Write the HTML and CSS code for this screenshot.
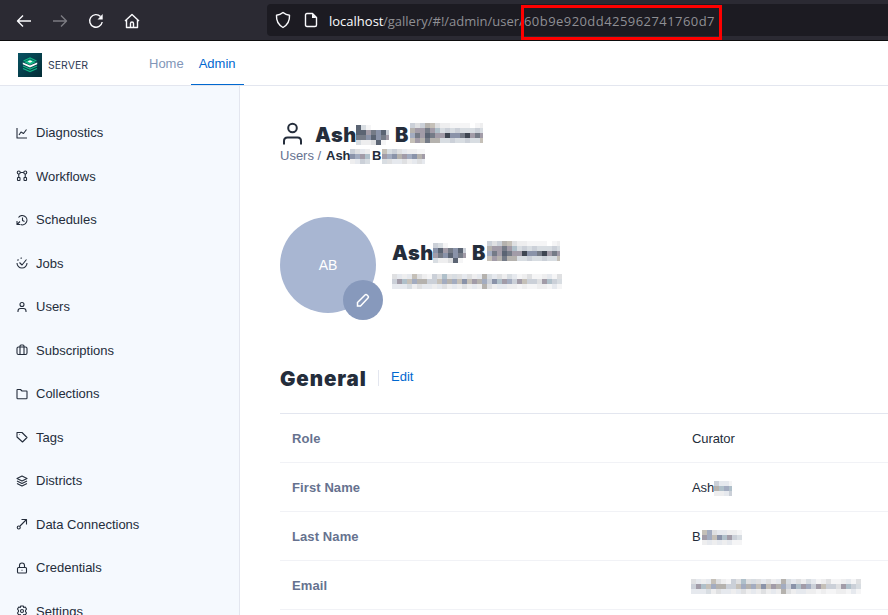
FILE: index.html
```html
<!DOCTYPE html>
<html lang="en">
<head>
    <meta charset="UTF-8">
    <meta name="viewport" content="width=device-width, initial-scale=1.0">
    <title>Server Admin - User</title>
    <link rel="stylesheet" href="styles.css">
</head>
<body>

<div class="toolbar">
    <div class="toolbar-buttons">
        <svg width="16" height="16" viewBox="0 0 16 16"><path d="M15 8H1.500M7 2.500L1.500 8L7 13.500"/></svg>
        <svg class="disabled" width="16" height="16" viewBox="0 0 16 16"><path d="M1 8h13.500M9 2.500L14.500 8L9 13.500"/></svg>
        <svg width="16" height="16" viewBox="0 0 16 16"><path d="M14.200 9A6.300 6.300 0 1 1 12.500 3.500"/><path class="solid" d="M14.700 1v5.500H9.500z"/></svg>
        <svg width="16" height="16" viewBox="0 0 16 16"><path d="M1 8l7-6.500L15 8M2.500 7v7.500h11V7M6.500 14.500v-4q0-1.500 1.500-1.500t1.500 1.500v4"/></svg>
    </div>
    <div class="address">
        <svg width="16" height="18" viewBox="0 0 16 18"><path d="M8 1.500Q11 4 14.500 4.300Q15 12.500 8 16.500Q1 12.500 1.500 4.300Q5 4 8 1.500z"/></svg>
        <svg class="page-icon" width="14" height="16" viewBox="0 0 14 16"><path d="M3 1.500h5.500l4 4V13q0 1.500-1.500 1.500H3Q1.500 14.500 1.500 13V3Q1.500 1.500 3 1.500z"/><path class="solid" d="M8 1.500v4.500h4.500z"/></svg>
        <span class="host">localhost</span><span class="path">/gallery/#!/admin/user/</span><span class="user-id">60b9e920dd425962741760d7</span>
    </div>
</div>

<div class="navbar">
    <svg class="logo" width="24" height="24" viewBox="0 0 24 24">
        <defs><linearGradient id="logo-bg" x1="0" y1="0" x2="1" y2="1"><stop offset="0" stop-color="#075262"/><stop offset="1" stop-color="#032c35"/></linearGradient></defs>
        <rect width="24" height="24" fill="url(#logo-bg)"/>
        <path d="M5.500 8L12 5l6.500 3" fill="none" stroke="#12b886" stroke-width="1.200"/>
        <path d="M12 6.300L18 9l-6 3-6-3z" fill="#12b886"/>
        <path d="M9.500 8.500L12 7.300l2.500 1.200L12 9.700z" fill="#fff"/>
        <path d="M4.800 9.500L12 12.500l7.200-3v1.800L12 14.500l-7.200-3.200z" fill="#fff"/>
        <path d="M5 13l7 3 7-3M5 15.500l7 3 7-3" fill="none" stroke="#12b886" stroke-width="1.300"/>
    </svg>
    <span class="brand">SERVER</span>
    <a class="nav-link">Home</a>
    <a class="nav-link active">Admin</a>
</div>

<div class="layout">
    <div class="sidebar">
        <a class="item"><svg viewBox="0 0 24 24"><path d="M2 2v20h20M6 16l4-6 5 3 6-8"/></svg>Diagnostics</a>
        <a class="item"><svg viewBox="0 0 24 24"><circle cx="5.500" cy="5" r="3"/><circle cx="18.500" cy="5" r="3"/><rect x="3" y="15" width="5" height="6" rx="1"/><rect x="16" y="15" width="5" height="6" rx="1"/><path d="M8.500 5h7M5.500 8v7M18.500 8v7"/></svg>Workflows</a>
        <a class="item"><svg viewBox="0 0 24 24"><path d="M5 7a9.300 9.300 0 1 1 4 14M13 7v6l4 2M2 21l6-6M2 14v7h6"/></svg>Schedules</a>
        <a class="item"><svg viewBox="0 0 24 24"><path d="M2 12a10 10 0 0 0 20 0M3 7l2-2M9 2.500L12 2M7 11l5 5L21 5"/></svg>Jobs</a>
        <a class="item"><svg viewBox="0 0 24 24"><circle cx="12" cy="7" r="4"/><path d="M4 22v-2q0-5 5-5h6q5 0 5 5v2"/></svg>Users</a>
        <a class="item"><svg viewBox="0 0 24 24"><rect x="2" y="6" width="20" height="15" rx="3"/><path d="M8 21V4q0-2 2-2h4q2 0 2 2v17"/></svg>Subscriptions</a>
        <a class="item"><svg viewBox="0 0 24 24"><path d="M2 20V4q0-1 1-1h6l3 3h9q1 0 1 1v13q0 1.500-1.500 1.500h-17Q2 21.500 2 20z"/></svg>Collections</a>
        <a class="item"><svg viewBox="0 0 24 24"><path d="M2 3h10l10 10-9 9L2 12zM7 7v1"/></svg>Tags</a>
        <a class="item"><svg viewBox="0 0 24 24"><path d="M12 2l10 5-10 5L2 7zM2 12l10 5 10-5M2 17l10 5 10-5"/></svg>Districts</a>
        <a class="item"><svg viewBox="0 0 24 24"><circle cx="5.500" cy="19" r="3"/><path d="M8 16L21 3M11 3h10v10"/></svg>Data Connections</a>
        <a class="item"><svg viewBox="0 0 24 24"><rect x="3" y="11" width="18" height="11" rx="2"/><path d="M7 11V7a5 5 0 0 1 10 0v4M11 16.500h2"/></svg>Credentials</a>
        <a class="item"><svg viewBox="0 0 24 24"><circle cx="12" cy="12" r="3"/><path d="M9.500 2h5l1 3 3-1 2.500 4-2 3v2l2 3-2.500 4-3-1-1 3h-5l-1-3-3 1L3 16l2-3v-2L3 8l2.500-4 3 1z"/></svg>Settings</a>
    </div>

    <div class="content">
        <div class="page-title">
            <svg class="title-icon" width="24" height="24" viewBox="0 0 24 24"><circle cx="12.500" cy="6" r="4.300"/><path d="M4 22.500V19q0-3.500 3.500-3.500h10q3.500 0 3.500 3.500v3.500"/></svg>
            <span class="name"><span class="first">Ash</span><i class="mosaic" data-rows="1aeffff 1142319 2231324 addb1ef"></i><span class="last">B</span><i class="mosaic surname" data-rows="9b968bddeeeefed 644247a9a9aaa9a 524124403320424 846266aa9aa9aa8"></i></span>
        </div>
        <div class="breadcrumb">
            <span class="crumb">Users&nbsp;/&nbsp;</span><b class="crumb-first">Ash</b><i class="mosaic" data-rows="9bcd 3547 dc9a"></i><b class="crumb-last">B</b><i class="mosaic" data-rows="8a9bcddee 453645364 abccbdcbc"></i>
        </div>

        <div class="profile">
            <div class="avatar">AB
                <span class="avatar-edit"><svg width="16" height="16" viewBox="0 0 16 16"><path d="M2.500 14v-3.500l7.500-7.500q1-1 2 0l1 1q1 1 0 2L5.500 14z"/></svg></span>
            </div>
            <div class="profile-text">
                <span class="name"><span class="first">Ash</span><i class="mosaic" data-rows="9aeffff 3142319 4231324 addb1ef"></i><span class="last">B</span><i class="mosaic surname" data-rows="9b968bddeeeefed 644247a9a9aaa9a 524124403320424 846266aa9aa9aa8"></i></span>
                <i class="mosaic email" data-rows="bcdc8bde9b7babcbdc6acbdacedbeedceb 94785669985658384659374594899b479a cccadbccdcbdcdbdcd6bdccddedeeddece"></i>
            </div>
        </div>

        <div class="section-title">
            <h2>General</h2>
            <a class="edit">Edit</a>
        </div>

        <div class="details">
            <div class="row"><span class="label">Role</span><span class="value">Curator</span></div>
            <div class="row"><span class="label">First Name</span><span class="value"><span class="value-first">Ash</span><i class="mosaic value-rest" data-rows="9cce 6757 ddc9"></i></span></div>
            <div class="row"><span class="label">Last Name</span><span class="value"><span class="value-last">B</span><i class="mosaic" data-rows="85bccdde 4583749a dcdcdcee"></i></span></div>
            <div class="row"><span class="label">Email</span><span class="value"><i class="mosaic row-email" data-rows="bcdc8bde9b7babcbdc6acbdacedbeedceb 94785669985658384659374594899b479a cccadbccdcbdcdbdcd6bdccddedeeddece"></i></span></div>
        </div>
    </div>
</div>

<script src="mosaic.js"></script>
</body>
</html>
```
FILE: styles.css
```css
*, *::after {
    box-sizing: border-box;
}
body {
    margin: 0;
    height: 615px;
    overflow: hidden;
    font-family: "Liberation Sans", Arial, sans-serif;
    font-size: 13px;
    color: #242d3b;
    background-color: #fff;
}
svg {
    display: block;
    flex: none;
    fill: none;
}

/* browser toolbar */
.toolbar {
    display: flex;
    height: 41px;
    padding-top: 4px;
    background-color: #2b2a33;
    border-bottom: 1px solid #0c0c0d;
}
.toolbar svg {
    stroke: #fbfbfe;
    stroke-width: 1.4;
    stroke-linejoin: round;
}
.toolbar .solid {
    fill: #fbfbfe;
    stroke: none;
}
.toolbar .disabled {
    stroke: #7c7b82;
}
.toolbar-buttons {
    display: flex;
    gap: 20px;
    width: 267px;
    padding: 9px 0 0 16px;
}
.address {
    display: flex;
    align-items: center;
    flex: 1;
    height: 32px;
    padding-left: 8px;
    background-color: #1c1b22;
    border-radius: 4px 0 0 4px;
    font-family: "Open Sans", "Noto Sans", sans-serif;
    font-size: 13px;
    color: #8f8f94;
    white-space: nowrap;
}
.address span {
    padding-top: 2px;
}
.page-icon {
    margin: 0 11px 0 13px;
}
.host {
    width: 54px;
    color: #fbfbfe;
}
.path {
    width: 138px;
}
.address .user-id {
    position: relative;
    width: 201px;
    padding-left: 3px;
    letter-spacing: 0.44px;
}
.user-id::after {
    content: "";
    position: absolute;
    left: 0;
    top: -5px;
    width: 201px;
    height: 35px;
    border: 3px solid #fe0000;
}

/* app header */
.navbar {
    display: flex;
    align-items: center;
    height: 45px;
    padding-left: 18px;
    border-bottom: 1px solid #e3e6ef;
}
.logo {
    margin-top: 4px;
}
.brand {
    width: 93px;
    padding: 4px 0 0 6px;
    font-family: Inter, sans-serif;
    font-size: 10.5px;
    color: #323e58;
}
.nav-link {
    height: 44px;
    padding: 0 8px;
    margin-left: 6px;
    line-height: 45px;
    color: #8296b8;
}
.nav-link.active {
    margin-left: -1px;
    color: #0068d0;
    border-bottom: 1px solid #0068d0;
}

.layout {
    display: flex;
    height: 529px;
}
.sidebar {
    width: 240px;
    padding-top: 25px;
    background-color: #f5f9fe;
    border-right: 1px solid #e3e6ef;
}
.item {
    display: flex;
    align-items: center;
    gap: 8px;
    height: 43.5px;
    padding-left: 16px;
}
.item svg {
    width: 12px;
    height: 12px;
    stroke: #242d3b;
    stroke-width: 2.2;
    stroke-linejoin: round;
}

.content {
    flex: 1;
    padding: 36px 0 0 40px;
}
.mosaic {
    display: block;
    flex: none;
    overflow: hidden;
}
.name {
    display: flex;
    align-items: center;
    height: 24px;
    font-family: Inter, sans-serif;
    font-size: 20px;
    font-weight: 900;
    letter-spacing: 0.5px;
}
.name .mosaic {
    width: 33px;
}
.name .surname {
    width: 73px;
    margin-bottom: 4px;
}
.first {
    width: 41px;
}
.last {
    width: 15px;
    margin-left: 6px;
}
.page-title {
    display: flex;
    align-items: center;
    height: 24px;
    gap: 11px;
}
.page-title .name {
    padding-top: 2px;
}
.title-icon {
    stroke: #242d3b;
    stroke-width: 2;
}
.breadcrumb {
    display: flex;
    align-items: center;
    height: 18px;
    color: #66728f;
}
.crumb {
    width: 46px;
    white-space: nowrap;
}
.breadcrumb b {
    color: #242d3b;
}
.breadcrumb .mosaic {
    max-width: 43px;
    margin-top: 2px;
}
.crumb-first {
    width: 24px;
}
.crumb-last {
    width: 10px;
    margin-left: 2px;
}

.profile {
    display: flex;
    gap: 16px;
    margin-top: 53px;
}
.avatar {
    position: relative;
    width: 96px;
    height: 96px;
    border-radius: 50%;
    background-color: #a8b6d2;
    color: #fff;
    font-size: 14px;
    line-height: 96px;
    text-align: center;
}
.avatar-edit {
    position: absolute;
    left: 63px;
    top: 63px;
    display: flex;
    align-items: center;
    justify-content: center;
    width: 40px;
    height: 40px;
    border-radius: 50%;
    background-color: #8799bc;
}
.avatar-edit svg {
    stroke: #fff;
    stroke-width: 1.5;
}
.profile-text {
    padding-top: 24px;
}
.email {
    margin-top: 9px;
}

.section-title {
    display: flex;
    align-items: center;
    height: 24px;
    margin: 53px 0 23px;
}
h2 {
    width: 98px;
    margin: 0;
    font-family: Inter, sans-serif;
    font-size: 20.5px;
    font-weight: 900;
    letter-spacing: 0.9px;
}
.edit {
    height: 16px;
    padding-left: 12px;
    border-left: 1px solid #e3e6ef;
    line-height: 14px;
    color: #0068d0;
}

.details {
    border-top: 1px solid #e3e6ef;
}
.row {
    display: flex;
    align-items: center;
    height: 49px;
    padding-left: 12px;
    border-bottom: 1px solid #f1f2f6;
}
.label {
    width: 400px;
    font-weight: bold;
    letter-spacing: 0.1px;
    color: #66728f;
}
.value {
    display: flex;
    align-items: center;
    letter-spacing: -0.1px;
}
.value-first {
    width: 22px;
}
.value-last {
    width: 10px;
}
.value .mosaic {
    margin-top: 2px;
}
.value .value-rest {
    width: 18px;
}
.value .row-email {
    margin-left: -1px;
}
```
FILE: mosaic.js
```js
// draws the redacted parts of names as 5px blocks, one digit per block
var colors = ['#3f4652', '#5b6473', '#757b87', '#8a93a9', '#a29ca8', '#a3acc0', '#b5b2ae', '#b0c0ca',
    '#c5c0b8', '#cbd0d8', '#d8dde2', '#dfe0e2', '#e6e9ee', '#eeeeef', '#f5f5f6', '#ffffff'];

document.querySelectorAll('.mosaic').forEach(function (el) {
    var rows = el.dataset.rows.split(' ');
    var width = rows[0].length * 5;
    var height = rows.length * 5;
    var svg = '<svg width="' + width + '" height="' + height + '" shape-rendering="crispEdges">';
    rows.forEach(function (row, y) {
        row.split('').forEach(function (c, x) {
            svg += '<rect class="block" x="' + x * 5 + '" y="' + y * 5 + '" width="5" height="5" fill="' + colors[parseInt(c, 16)] + '"/>';
        });
    });
    el.innerHTML = svg + '</svg>';
});
```
